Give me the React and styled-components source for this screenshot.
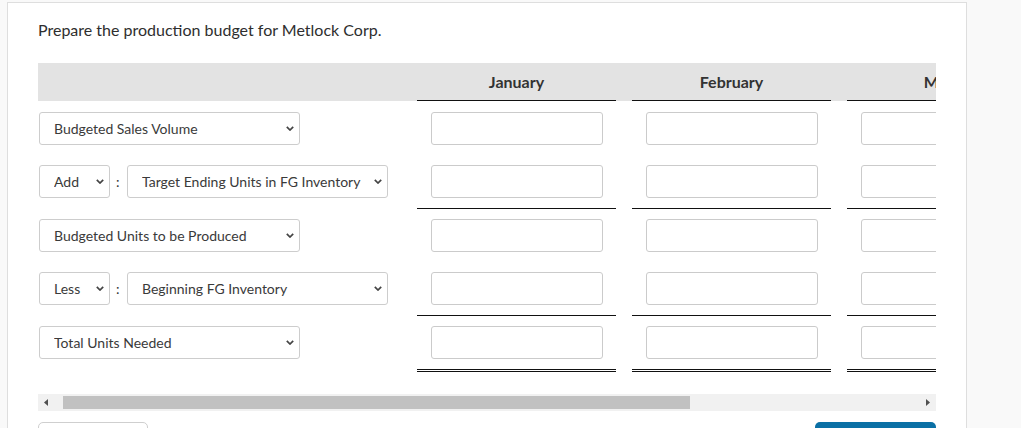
import React from 'react';
import styled, { createGlobalStyle } from 'styled-components';

const GlobalStyle = createGlobalStyle`
  html, body {
    margin: 0;
    overflow: hidden;
    background: #f9f9f9;
  }
  body {
    font-family: Lato, "Open Sans", sans-serif;
    color: #333;
  }
  * { box-sizing: border-box; }
`;

const months = ['January', 'February', 'March', 'Quarter'];

const rows = [
  { label: 'Budgeted Sales Volume' },
  { op: 'Add', label: 'Target Ending Units in FG Inventory', rule: 'single' },
  { label: 'Budgeted Units to be Produced' },
  { op: 'Less', label: 'Beginning FG Inventory', rule: 'single' },
  { label: 'Total Units Needed', rule: 'double' },
];

export default function App() {
  return (
    <>
      <GlobalStyle />
      <Page>
        <Card>
          <Prompt>Prepare the production budget for Metlock Corp.</Prompt>

          <Scroller>
            <Table>
              <HeadBlank />
              {months.map((m) => (
                <HeadCell key={m}>
                  <HeadLabel>{m}</HeadLabel>
                </HeadCell>
              ))}

              {rows.map((row, i) => (
                <React.Fragment key={i}>
                  <LabelCell>
                    {row.op && (
                      <>
                        <Dropdown width={71} value={row.op} options={['Add', 'Less']} />
                        <Colon>:</Colon>
                      </>
                    )}
                    <Dropdown width={261} value={row.label} options={[row.label]} />
                  </LabelCell>
                  {months.map((m) => (
                    <AmountCell key={m} rule={row.rule}>
                      <AmountInput type="text" aria-label={`${row.label} ${m}`} />
                    </AmountCell>
                  ))}
                </React.Fragment>
              ))}
            </Table>
          </Scroller>

          <ScrollTrack>
            <ArrowButton side="left">
              <svg width="4" height="7" viewBox="0 0 4 7">
                <path d="M4 0 L0 3.5 L4 7 Z" fill="#505050" />
              </svg>
            </ArrowButton>
            <ThumbRail>
              <Thumb size={627} />
            </ThumbRail>
            <ArrowButton side="right">
              <svg width="4" height="7" viewBox="0 0 4 7">
                <path d="M0 0 L4 3.5 L0 7 Z" fill="#505050" />
              </svg>
            </ArrowButton>
          </ScrollTrack>

          <Actions>
            <OutlineButton aria-label="Save for later" />
            <PrimaryButton aria-label="Submit answer" />
          </Actions>
        </Card>
      </Page>
    </>
  );
}

function Dropdown({ width, value, options }) {
  return (
    <SelectBox width={width}>
      <Select defaultValue={value}>
        {options.map((o) => (
          <option key={o}>{o}</option>
        ))}
      </Select>
      <Chevron width="8" height="5" viewBox="0 0 8 5">
        <polyline points="0.8,0.8 4,4 7.2,0.8" fill="none" stroke="#444" strokeWidth="1.7" />
      </Chevron>
    </SelectBox>
  );
}

const Page = styled.div`
  padding: 2px 0 0 7px;
`;

const Card = styled.div`
  width: 960px;
  min-height: 480px;
  background: #fff;
  border: 1px solid #dedede;
  padding: 15px 30px 20px 30px;
`;

const Prompt = styled.p`
  margin: 0;
  font-size: 16px;
  line-height: 24px;
  color: #2e2e2e;
`;

const Scroller = styled.div`
  margin-top: 21px;
  overflow: hidden;
`;

const Table = styled.div`
  display: grid;
  grid-template-columns: 371px repeat(4, 215px);
  width: max-content;
  padding-bottom: 22px;
`;

const HeadBlank = styled.div`
  height: 38px;
  margin-bottom: 1px;
  background: #e3e3e3;
`;

const HeadCell = styled.div`
  height: 38px;
  margin-bottom: 1px;
  padding: 0 8px;
  background: #e3e3e3;
`;

const HeadLabel = styled.div`
  height: 100%;
  display: flex;
  align-items: center;
  justify-content: center;
  border-bottom: 1px solid #111;
  font-size: 16px;
  font-weight: 700;
  color: #333;
`;

const LabelCell = styled.div`
  align-self: start;
  display: flex;
  align-items: center;
  padding: 10px 0 10px 1px;
`;

const Colon = styled.span`
  width: 4px;
  margin: 0 7px 0 6px;
  font-size: 14px;
  color: #333;
`;

const SelectBox = styled.div`
  position: relative;
  width: ${(p) => p.width}px;
  height: 33px;
`;

const Select = styled.select`
  appearance: none;
  width: 100%;
  height: 100%;
  margin: 0;
  padding: 0 20px 0 14px;
  border: 1px solid #cdcdcd;
  border-radius: 3px;
  background: #fff;
  font-family: Lato, "Open Sans", sans-serif;
  font-size: 14px;
  color: #3a3a3a;
  outline: none;
`;

const Chevron = styled.svg`
  position: absolute;
  right: 6px;
  top: 14px;
  pointer-events: none;
`;

const AmountCell = styled.div`
  margin: 0 8px;
  padding: 10px 0;
  display: flex;
  justify-content: center;
  border-bottom: ${(p) =>
    p.rule === 'double' ? '3px double #111' : p.rule === 'single' ? '1px solid #111' : '0'};
`;

const AmountInput = styled.input`
  width: 172px;
  height: 33px;
  margin: 0;
  border: 1px solid #cbcbcb;
  border-radius: 3px;
  background: #fff;
  font-family: Lato, "Open Sans", sans-serif;
  font-size: 14px;
  outline: none;
`;

const ScrollTrack = styled.div`
  display: flex;
  height: 17px;
  background: #f1f1f1;
`;

const ArrowButton = styled.div`
  width: ${(p) => (p.side === 'left' ? 25 : 17)}px;
  display: flex;
  align-items: center;
  justify-content: ${(p) => (p.side === 'left' ? 'flex-start' : 'flex-end')};
  padding: ${(p) => (p.side === 'left' ? '0 0 0 6px' : '0 6px 0 0')};
`;

const ThumbRail = styled.div`
  flex: 1;
  padding: 2px 0;
`;

const Thumb = styled.div`
  width: ${(p) => p.size}px;
  height: 100%;
  background: #c1c1c1;
`;

const Actions = styled.div`
  display: flex;
  justify-content: space-between;
  margin-top: 11px;
`;

const OutlineButton = styled.button`
  width: 110px;
  height: 36px;
  border: 1px solid #cfcfcf;
  border-radius: 5px;
  background: #fff;
`;

const PrimaryButton = styled.button`
  width: 121px;
  height: 36px;
  border: 0;
  border-radius: 5px;
  background: #0b70a5;
`;
